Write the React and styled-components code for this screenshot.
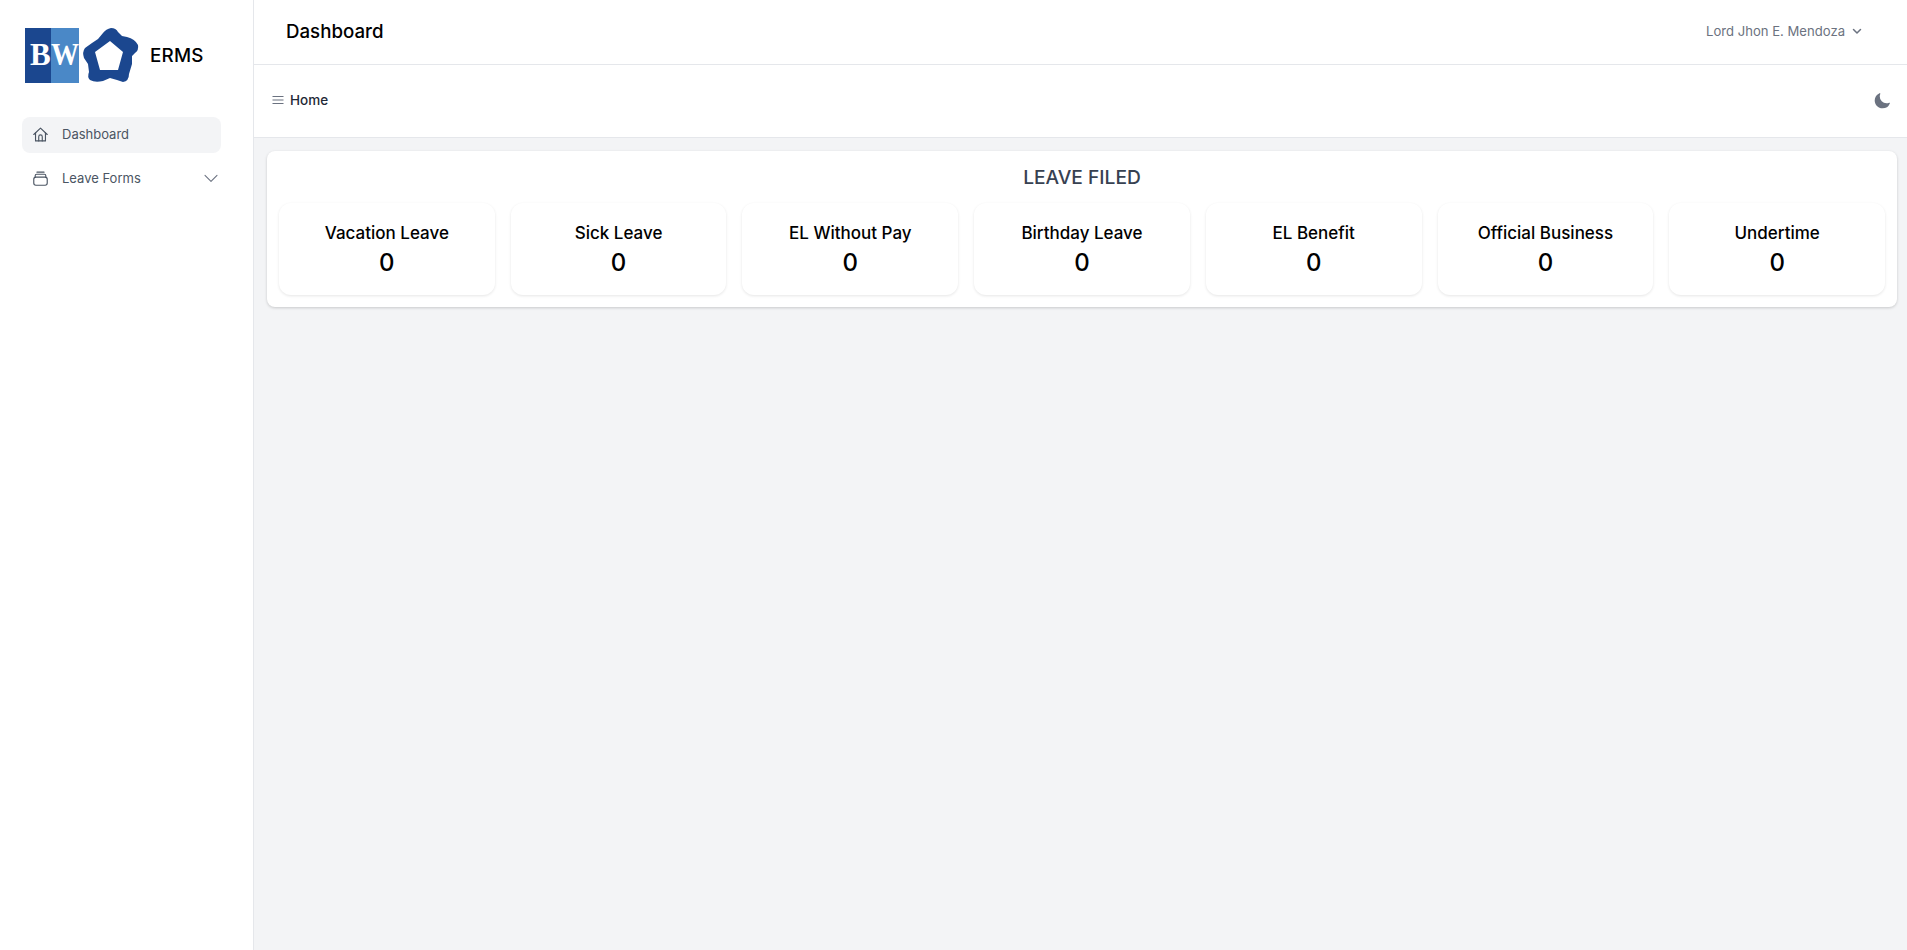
import React from 'react';
import styled, { createGlobalStyle } from 'styled-components';

const GlobalStyle = createGlobalStyle`
  html, body {
    margin: 0;
    height: 100%;
    background: #f3f4f6;
    font-family: "Inter", "Liberation Sans", sans-serif;
  }
  #root {
    height: 100%;
  }
  * {
    box-sizing: border-box;
  }
`;

const leaves = [
  'Vacation Leave',
  'Sick Leave',
  'EL Without Pay',
  'Birthday Leave',
  'EL Benefit',
  'Official Business',
  'Undertime',
];

const Logo = () => (
  <LogoSvg viewBox="0 0 114 55" aria-hidden="true">
    <rect x="0" y="0" width="26" height="55" fill="#1b478f" />
    <rect x="26" y="0" width="28" height="55" fill="#4a88c7" />
    <text x="5" y="37" fontFamily="Liberation Serif, serif" fontWeight="700" fontSize="31" fill="#fff">B</text>
    <text
      x="26"
      y="37"
      textLength="28"
      lengthAdjust="spacingAndGlyphs"
      fontFamily="Liberation Serif, serif"
      fontWeight="700"
      fontSize="31"
      fill="#fff"
    >
      W
    </text>
    <path
      fill="#1b478f"
      fillRule="evenodd"
      d="M86 0 Q91 0 93 4 L97 8 L102 9 Q110 11 113 17 Q114 22 110 25 L107 28 L107 36 L104 46 Q104 53 98 54 L92 52 L85 50 L78 53 Q70 55 65 52 Q62 49 64 44 L63 36 L59 30 Q57 24 60 20 L67 15 L73 11 L78 5 Q81 1 86 0 Z
         M85 13 L98 24 L93 42 L75 42 L70 24 Z"
    />
  </LogoSvg>
);

const App = () => (
  <Page>
    <GlobalStyle />
    <Sidebar>
      <Brand>
        <Logo />
        <BrandName>ERMS</BrandName>
      </Brand>
      <Nav>
        <NavItem $active>
          <NavIcon viewBox="0 0 24 24">
            <path d="M2.5 12 12 3l9.5 9" />
            <path d="M5 9.5V21H19V9.5" />
            <path d="M9.5 21V15a2.5 2.5 0 0 1 5 0V21" />
          </NavIcon>
          <NavLabel>Dashboard</NavLabel>
        </NavItem>
        <NavItem>
          <NavIcon viewBox="0 0 24 24">
            <rect x="2.5" y="10" width="19" height="11.5" rx="3" />
            <path d="M4.5 10V8a2 2 0 0 1 2-2h11a2 2 0 0 1 2 2v2" />
            <path d="M7 3h10" />
          </NavIcon>
          <NavLabel>Leave Forms</NavLabel>
          <Chevron viewBox="0 0 24 24" $size={16} $weight={1.6}>
            <path d="M3 8l9 9 9-9" />
          </Chevron>
        </NavItem>
      </Nav>
    </Sidebar>
    <Content>
      <TopBar>
        <PageTitle>Dashboard</PageTitle>
        <UserMenu>
          Lord Jhon E. Mendoza
          <Chevron viewBox="0 0 24 24" $size={12} $weight={3}>
            <path d="M5 9l7 7 7-7" />
          </Chevron>
        </UserMenu>
      </TopBar>
      <SubBar>
        <Crumb>
          <MenuIcon viewBox="0 0 14 14">
            <path d="M1.5 3.5h11M1.5 7h11M1.5 10.5h11" />
          </MenuIcon>
          Home
        </Crumb>
        <MoonIcon viewBox="0 0 24 24">
          <path d="M9.528 1.718a.75.75 0 0 1 .162.819A8.97 8.97 0 0 0 9 6a9 9 0 0 0 9 9 8.97 8.97 0 0 0 3.463-.69.75.75 0 0 1 .981.98 10.503 10.503 0 0 1-9.694 6.46c-5.799 0-10.5-4.7-10.5-10.5 0-4.368 2.667-8.112 6.46-9.694a.75.75 0 0 1 .818.162Z" />
        </MoonIcon>
      </SubBar>
      <Main>
        <Panel>
          <PanelTitle>LEAVE FILED</PanelTitle>
          <StatGrid>
            {leaves.map((name) => (
              <StatCard key={name}>
                <StatName>{name}</StatName>
                <StatValue>0</StatValue>
              </StatCard>
            ))}
          </StatGrid>
        </Panel>
      </Main>
    </Content>
  </Page>
);

const Page = styled.div`
  display: flex;
  height: 100vh;
  overflow: hidden;
`;

const Sidebar = styled.aside`
  flex: 0 0 254px;
  background: #fff;
  border-right: 1px solid #e5e7eb;
  padding: 28px 32px 0 22px;
`;

const Brand = styled.div`
  display: flex;
  align-items: center;
  gap: 11px;
  padding-left: 3px;
  height: 55px;
`;

const LogoSvg = styled.svg`
  width: 114px;
  height: 55px;
  flex: none;
`;

const BrandName = styled.span`
  font-size: 18.8px;
  font-weight: 500;
  color: #000;
  letter-spacing: 0.2px;
`;

const Nav = styled.nav`
  display: flex;
  flex-direction: column;
  gap: 8px;
  margin-top: 34px;
`;

const NavItem = styled.div`
  display: flex;
  align-items: center;
  height: 36px;
  padding: 0 2px 2px 10px;
  border-radius: 8px;
  background: ${(p) => (p.$active ? '#f3f4f6' : 'transparent')};
  color: #4b5563;
`;

const NavIcon = styled.svg`
  width: 17px;
  height: 17px;
  flex: none;
  fill: none;
  stroke: #4b5563;
  stroke-width: 1.6;
  stroke-linecap: round;
  stroke-linejoin: round;
`;

const NavLabel = styled.span`
  flex: 1;
  margin-left: 13px;
  font-size: 13px;
  color: #4b5563;
`;

const Chevron = styled.svg`
  width: ${(p) => p.$size}px;
  height: ${(p) => p.$size}px;
  flex: none;
  fill: none;
  stroke: #6b7280;
  stroke-width: ${(p) => p.$weight};
  stroke-linecap: round;
  stroke-linejoin: round;
`;

const Content = styled.div`
  flex: 1;
  min-width: 0;
  display: flex;
  flex-direction: column;
`;

const TopBar = styled.header`
  flex: none;
  display: flex;
  align-items: center;
  justify-content: space-between;
  height: 65px;
  padding: 0 44px 2px 32px;
  background: #fff;
  border-bottom: 1px solid #e5e7eb;
`;

const PageTitle = styled.h1`
  margin: 0;
  font-size: 18.7px;
  font-weight: 500;
  color: #000;
`;

const UserMenu = styled.div`
  display: flex;
  align-items: center;
  gap: 6px;
  font-size: 13.1px;
  color: #6b7280;
`;

const SubBar = styled.div`
  flex: none;
  display: flex;
  align-items: center;
  justify-content: space-between;
  height: 73px;
  padding: 0 16px 0 17px;
  background: #fff;
  border-bottom: 1px solid #e5e7eb;
`;

const Crumb = styled.div`
  display: flex;
  align-items: center;
  gap: 5px;
  margin-bottom: 2px;
  font-size: 13.5px;
  font-weight: 500;
  color: #1f2937;
`;

const MenuIcon = styled.svg`
  width: 14px;
  height: 14px;
  fill: none;
  stroke: #6b7280;
  stroke-width: 1.2;
`;

const MoonIcon = styled.svg`
  width: 18px;
  height: 18px;
  fill: #6b7280;
`;

const Main = styled.main`
  flex: 1;
  padding: 13px 10px 0 13px;
  background: #f3f4f6;
`;

const Panel = styled.section`
  background: #fff;
  border-radius: 8px;
  padding: 15px 12px 12px;
  box-shadow: 0 1px 3px rgba(0, 0, 0, 0.18);
`;

const PanelTitle = styled.h2`
  margin: 0 0 14px;
  text-align: center;
  font-size: 19.2px;
  line-height: 23px;
  font-weight: 500;
  color: #374151;
`;

const StatGrid = styled.div`
  display: grid;
  grid-template-columns: repeat(7, 1fr);
  gap: 16px;
`;

const StatCard = styled.div`
  display: flex;
  flex-direction: column;
  align-items: center;
  height: 92px;
  padding-top: 18px;
  background: #fff;
  border-radius: 12px;
  box-shadow: 0 1px 3px rgba(0, 0, 0, 0.1);
`;

const StatName = styled.div`
  font-size: 17px;
  line-height: 24px;
  font-weight: 500;
  color: #000;
`;

const StatValue = styled.div`
  margin-top: 2px;
  font-size: 24px;
  line-height: 32px;
  font-weight: 500;
  color: #000;
`;

export default App;
